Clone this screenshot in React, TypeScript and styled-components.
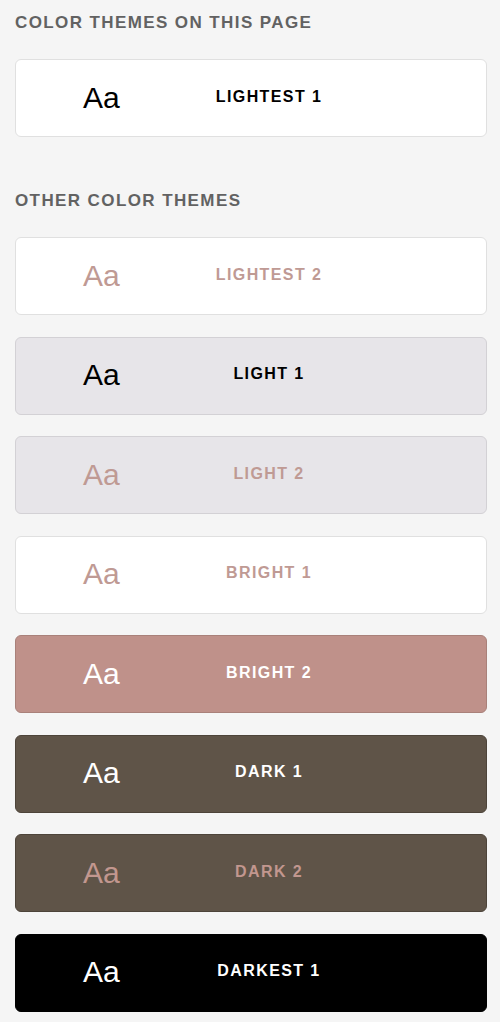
import React from "react";
import styled, { createGlobalStyle } from "styled-components";

const GlobalStyle = createGlobalStyle`
  body {
    margin: 0;
    background-color: #f5f5f5;
    font-family: "Liberation Sans", Arial, sans-serif;
  }
`;

const Page = styled.div`
  padding: 13px 13px 0 15px;
  background-color: #f5f5f5;
  min-height: 100vh;
  box-sizing: border-box;
`;

const Section = styled.section`
  margin-bottom: 54px;

  &:last-child {
    margin-bottom: 0;
  }
`;

const Heading = styled.h2`
  margin: 0 0 25.6px;
  font-size: 17px;
  line-height: 20.4px;
  font-weight: 700;
  letter-spacing: 1.4px;
  color: #626262;
`;

const List = styled.div`
  display: flex;
  flex-direction: column;
  gap: 21.3px;
`;

type CardProps = { $bg: string; $border: string };

const Card = styled.div<CardProps>`
  box-sizing: border-box;
  height: 78.2px;
  display: grid;
  grid-template-columns: 80px 212px;
  align-items: center;
  padding-left: 67px;
  background-color: ${(p) => p.$bg};
  border: 1px solid ${(p) => p.$border};
  border-radius: 6px;
`;

const Sample = styled.span<{ $color: string }>`
  font-size: 30px;
  line-height: 1;
  color: ${(p) => p.$color};
  margin-top: -1px;
`;

const Label = styled.span<{ $color: string }>`
  text-align: center;
  font-size: 16px;
  font-weight: 700;
  letter-spacing: 1.4px;
  color: ${(p) => p.$color};
  margin-top: -3px;
`;

type Theme = {
  name: string;
  bg: string;
  border: string;
  sample: string;
  label: string;
};

const current: Theme[] = [
  { name: "LIGHTEST 1", bg: "#ffffff", border: "#e0e0e0", sample: "#000000", label: "#000000" },
];

const others: Theme[] = [
  { name: "LIGHTEST 2", bg: "#ffffff", border: "#e0e0e0", sample: "#bf9a94", label: "#bf9a94" },
  { name: "LIGHT 1", bg: "#e7e5e9", border: "#d3d1d5", sample: "#000000", label: "#000000" },
  { name: "LIGHT 2", bg: "#e7e5e9", border: "#d3d1d5", sample: "#bf9a94", label: "#bf9a94" },
  { name: "BRIGHT 1", bg: "#ffffff", border: "#e0e0e0", sample: "#bf9a94", label: "#bf9a94" },
  { name: "BRIGHT 2", bg: "#bf918a", border: "#a9817a", sample: "#ffffff", label: "#ffffff" },
  { name: "DARK 1", bg: "#5f5448", border: "#4d443a", sample: "#ffffff", label: "#ffffff" },
  { name: "DARK 2", bg: "#5f5448", border: "#4d443a", sample: "#c2978f", label: "#c2978f" },
  { name: "DARKEST 1", bg: "#000000", border: "#000000", sample: "#ffffff", label: "#ffffff" },
];

function ThemeCard({ theme }: { theme: Theme }) {
  return (
    <Card $bg={theme.bg} $border={theme.border}>
      <Sample $color={theme.sample}>Aa</Sample>
      <Label $color={theme.label}>{theme.name}</Label>
    </Card>
  );
}

export default function App() {
  return (
    <Page>
      <GlobalStyle />
      <Section>
        <Heading>COLOR THEMES ON THIS PAGE</Heading>
        <List>
          {current.map((t) => (
            <ThemeCard key={t.name} theme={t} />
          ))}
        </List>
      </Section>
      <Section>
        <Heading>OTHER COLOR THEMES</Heading>
        <List>
          {others.map((t) => (
            <ThemeCard key={t.name} theme={t} />
          ))}
        </List>
      </Section>
    </Page>
  );
}
